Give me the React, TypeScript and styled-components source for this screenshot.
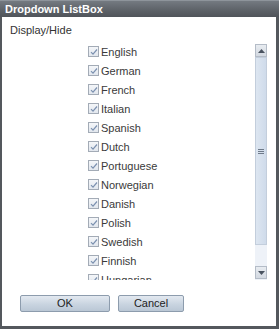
import React from "react";
import styled, { createGlobalStyle } from "styled-components";

const GlobalStyle = createGlobalStyle`
  html, body {
    margin: 0;
    padding: 0;
    background: #ffffff;
  }
  * {
    box-sizing: border-box;
  }
`;

const languages = [
  "English",
  "German",
  "French",
  "Italian",
  "Spanish",
  "Dutch",
  "Portuguese",
  "Norwegian",
  "Danish",
  "Polish",
  "Swedish",
  "Finnish",
  "Hungarian",
];

export default function App() {
  return (
    <>
      <GlobalStyle />
      <Window>
        <TitleBar>Dropdown ListBox</TitleBar>
        <Body>
          <Caption>Display/Hide</Caption>
          <ListBox>
            <Items>
              {languages.map((lang) => (
                <Row key={lang}>
                  <CheckBox>
                    <svg width="8" height="8" viewBox="0 0 8 8">
                      <path
                        d="M1 4.2 L3 6.2 L7 1.5"
                        fill="none"
                        stroke="#7c91b0"
                        strokeWidth="1.2"
                      />
                    </svg>
                  </CheckBox>
                  <Label>{lang}</Label>
                </Row>
              ))}
            </Items>
            <ScrollBar>
              <ScrollButton>
                <svg width="7" height="4" viewBox="0 0 7 4">
                  <path d="M0 4 L3.5 0 L7 4 Z" fill="#4a5360" />
                </svg>
              </ScrollButton>
              <Track>
                <Thumb>
                  <Grip />
                  <Grip />
                  <Grip />
                </Thumb>
              </Track>
              <ScrollButton>
                <svg width="7" height="4" viewBox="0 0 7 4">
                  <path d="M0 0 L3.5 4 L7 0 Z" fill="#4a5360" />
                </svg>
              </ScrollButton>
            </ScrollBar>
          </ListBox>
          <ButtonRow>
            <Button $width={90}>OK</Button>
            <Button $width={66}>Cancel</Button>
          </ButtonRow>
        </Body>
      </Window>
    </>
  );
}

const Window = styled.div`
  width: 279px;
  height: 329px;
  display: flex;
  flex-direction: column;
  border-left: 2px solid #54585d;
  border-right: 3px solid #54585d;
  border-bottom: 3px solid #54585d;
  background: #ffffff;
  font-family: "Liberation Sans", Arial, sans-serif;
  color: #333;
`;

const TitleBar = styled.div`
  height: 17px;
  margin: 0 -3px 0 -2px;
  padding: 1px 0 0 5px;
  border-top: 1px solid #8e949b;
  background: linear-gradient(#747a81, #5c6167 60%, #50545a);
  color: #ffffff;
  font-size: 11px;
  font-weight: bold;
  line-height: 14px;
  flex-shrink: 0;
`;

const Body = styled.div`
  flex: 1;
  display: flex;
  flex-direction: column;
  padding: 7px 9px 0 8px;
`;

const Caption = styled.div`
  font-size: 11px;
  line-height: 13px;
  height: 13px;
  color: #333;
`;

const ListBox = styled.div`
  margin-top: 7px;
  height: 236px;
  display: flex;
  overflow: hidden;
`;

const Items = styled.div`
  flex: 1;
  margin-top: -2px;
  padding: 0 0 0 78px;
  display: flex;
  flex-direction: column;
`;

const Row = styled.div`
  height: 19px;
  flex-shrink: 0;
  display: flex;
  align-items: center;
  gap: 2px;
`;

const CheckBox = styled.span`
  width: 11px;
  height: 11px;
  border: 1px solid #a3abb6;
  background: linear-gradient(#f4f6f9, #e2e7ee);
  display: flex;
  align-items: center;
  justify-content: center;
`;

const Label = styled.span`
  font-size: 11px;
  color: #3a3a3a;
`;

const ScrollBar = styled.div`
  width: 12px;
  display: flex;
  flex-direction: column;
  background: #eef2f8;
  padding-bottom: 1px;
`;

const ScrollButton = styled.div`
  height: 13px;
  flex-shrink: 0;
  border: 1px solid #b4bcc7;
  background: linear-gradient(#e8ecf1, #d3d9e1);
  display: flex;
  align-items: center;
  justify-content: center;
`;

const Track = styled.div`
  flex: 1;
  display: flex;
  flex-direction: column;
  padding-bottom: 21px;
`;

const Thumb = styled.div`
  flex: 1;
  border: 1px solid #c3cedc;
  background: linear-gradient(90deg, #dde6f1, #cfdbea);
  display: flex;
  flex-direction: column;
  align-items: center;
  justify-content: center;
  gap: 1px;
`;

const Grip = styled.div`
  width: 6px;
  height: 1px;
  background: #6e7a8a;
`;

const ButtonRow = styled.div`
  margin-top: 15px;
  padding-left: 10px;
  display: flex;
  gap: 8px;
`;

const Button = styled.div<{ $width: number }>`
  width: ${(p) => p.$width}px;
  height: 17px;
  border: 1px solid #8d9cad;
  border-radius: 2px;
  background: linear-gradient(#e3e9f0, #c9d4e0 55%, #bac7d5);
  font-size: 11px;
  line-height: 15px;
  text-align: center;
  color: #222;
`;
